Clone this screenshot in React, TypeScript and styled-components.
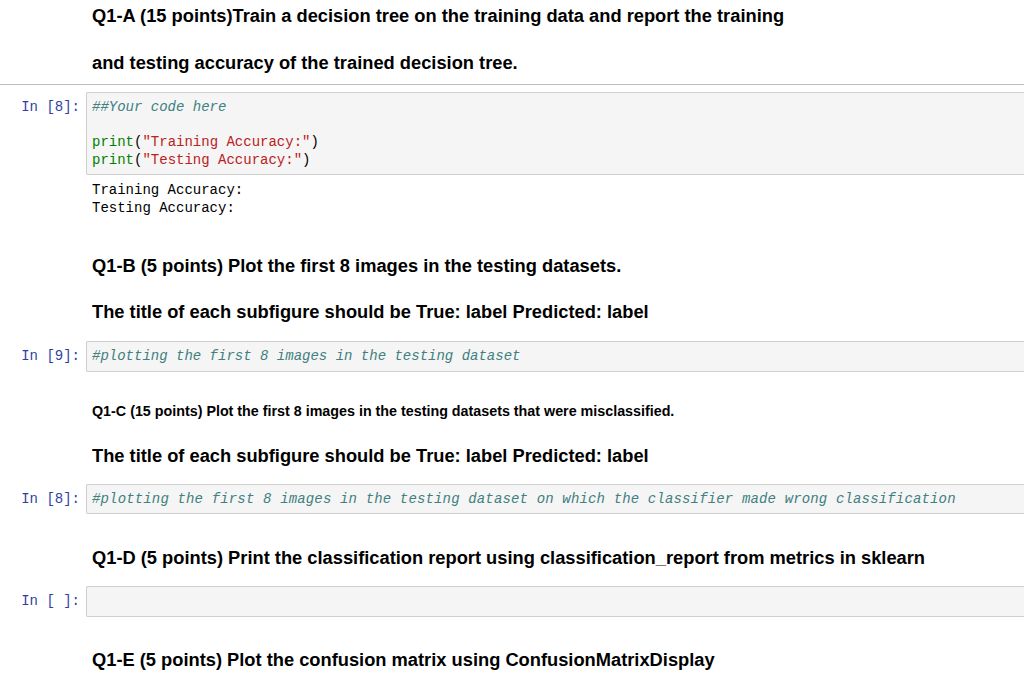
import styled, { createGlobalStyle } from "styled-components";

const GlobalStyle = createGlobalStyle`
  html, body {
    margin: 0;
    padding: 0;
    background: #ffffff;
    overflow: hidden;
  }
  body {
    font-family: "Liberation Sans", Arial, sans-serif;
    color: #000;
  }
`;

const Notebook = styled.div`
  width: 1024px;
  height: 685px;
  overflow: hidden;
`;

const Row = styled.div<{ top?: number }>`
  display: grid;
  grid-template-columns: 86px 1fr;
  margin-top: ${(p) => p.top ?? 0}px;
`;

const Prompt = styled.div`
  font-family: "Liberation Mono", "DejaVu Sans Mono", monospace;
  font-size: 14px;
  line-height: 17.5px;
  color: #303f9f;
  text-align: right;
  padding: 7px 6px 0 0;
  white-space: pre;
`;

const Markdown = styled.div`
  padding-left: 6px;
  display: flex;
  flex-direction: column;
`;

const Heading = styled.div<{ small?: boolean; gap?: number }>`
  font-weight: bold;
  font-size: ${(p) => (p.small ? 14.3 : 18.3)}px;
  line-height: 20px;
  margin-top: ${(p) => p.gap ?? 0}px;
  white-space: nowrap;
`;

const Rule = styled.hr`
  margin: 11px 0 0 0;
  border: none;
  border-top: 1px solid #bdbdbd;
  height: 0;
`;

const InputArea = styled.div`
  background: #f5f5f5;
  border: 1px solid #cfcfcf;
  border-right: none;
  border-radius: 2px 0 0 2px;
  padding: 6px 5px 5px;
  min-height: 17.5px;
`;

const Code = styled.pre<{ wide?: boolean }>`
  margin: 0;
  font-family: "Liberation Mono", "DejaVu Sans Mono", monospace;
  font-size: 14px;
  line-height: 17.5px;
  letter-spacing: ${(p) => (p.wide ? "0.15px" : "0")};
  white-space: pre;
  color: #000;
`;

const Output = styled(Code)`
  padding: 7px 6px 0;
`;

const Comment = styled.span`
  color: #408080;
  font-style: italic;
`;

const Builtin = styled.span`
  color: #008000;
`;

const Str = styled.span`
  color: #ba2121;
`;

const PrintLine = ({ text }: { text: string }) => (
  <>
    <Builtin>print</Builtin>(<Str>"{text}"</Str>)
  </>
);

const CodeCell = ({
  count,
  top,
  wide,
  children,
}: {
  count: string;
  top?: number;
  wide?: boolean;
  children?: React.ReactNode;
}) => (
  <Row top={top}>
    <Prompt>{`In [${count}]:`}</Prompt>
    <InputArea>
      <Code wide={wide}>{children}</Code>
    </InputArea>
  </Row>
);

export default function App() {
  return (
    <Notebook>
      <GlobalStyle />
      <Row top={6}>
        <div />
        <Markdown>
          <Heading>
            Q1-A (15 points)Train a decision tree on the training data and report the training
          </Heading>
          <Heading gap={27}>and testing accuracy of the trained decision tree.</Heading>
        </Markdown>
      </Row>
      <Rule />

      <CodeCell count="8" top={7}>
        <Comment>##Your code here</Comment>
        {"\n\n"}
        <PrintLine text="Training Accuracy:" />
        {"\n"}
        <PrintLine text="Testing Accuracy:" />
      </CodeCell>
      <Row>
        <div />
        <Output>{"Training Accuracy:\nTesting Accuracy:"}</Output>
      </Row>

      <Row top={39}>
        <div />
        <Markdown>
          <Heading>Q1-B (5 points) Plot the first 8 images in the testing datasets.</Heading>
          <Heading gap={26}>The title of each subfigure should be True: label Predicted: label</Heading>
        </Markdown>
      </Row>

      <CodeCell count="9" top={19}>
        <Comment>#plotting the first 8 images in the testing dataset</Comment>
      </CodeCell>

      <Row top={29}>
        <div />
        <Markdown>
          <Heading small>
            Q1-C (15 points) Plot the first 8 images in the testing datasets that were misclassified.
          </Heading>
          <Heading gap={25}>The title of each subfigure should be True: label Predicted: label</Heading>
        </Markdown>
      </Row>

      <CodeCell count="8" top={18} wide>
        <Comment>
          #plotting the first 8 images in the testing dataset on which the classifier made wrong classification
        </Comment>
      </CodeCell>

      <Row top={34}>
        <div />
        <Markdown>
          <Heading>
            Q1-D (5 points) Print the classification report using classification_report from metrics in sklearn
          </Heading>
        </Markdown>
      </Row>

      <CodeCell count=" " top={18} />

      <Row top={33}>
        <div />
        <Markdown>
          <Heading>Q1-E (5 points) Plot the confusion matrix using ConfusionMatrixDisplay</Heading>
        </Markdown>
      </Row>
    </Notebook>
  );
}
